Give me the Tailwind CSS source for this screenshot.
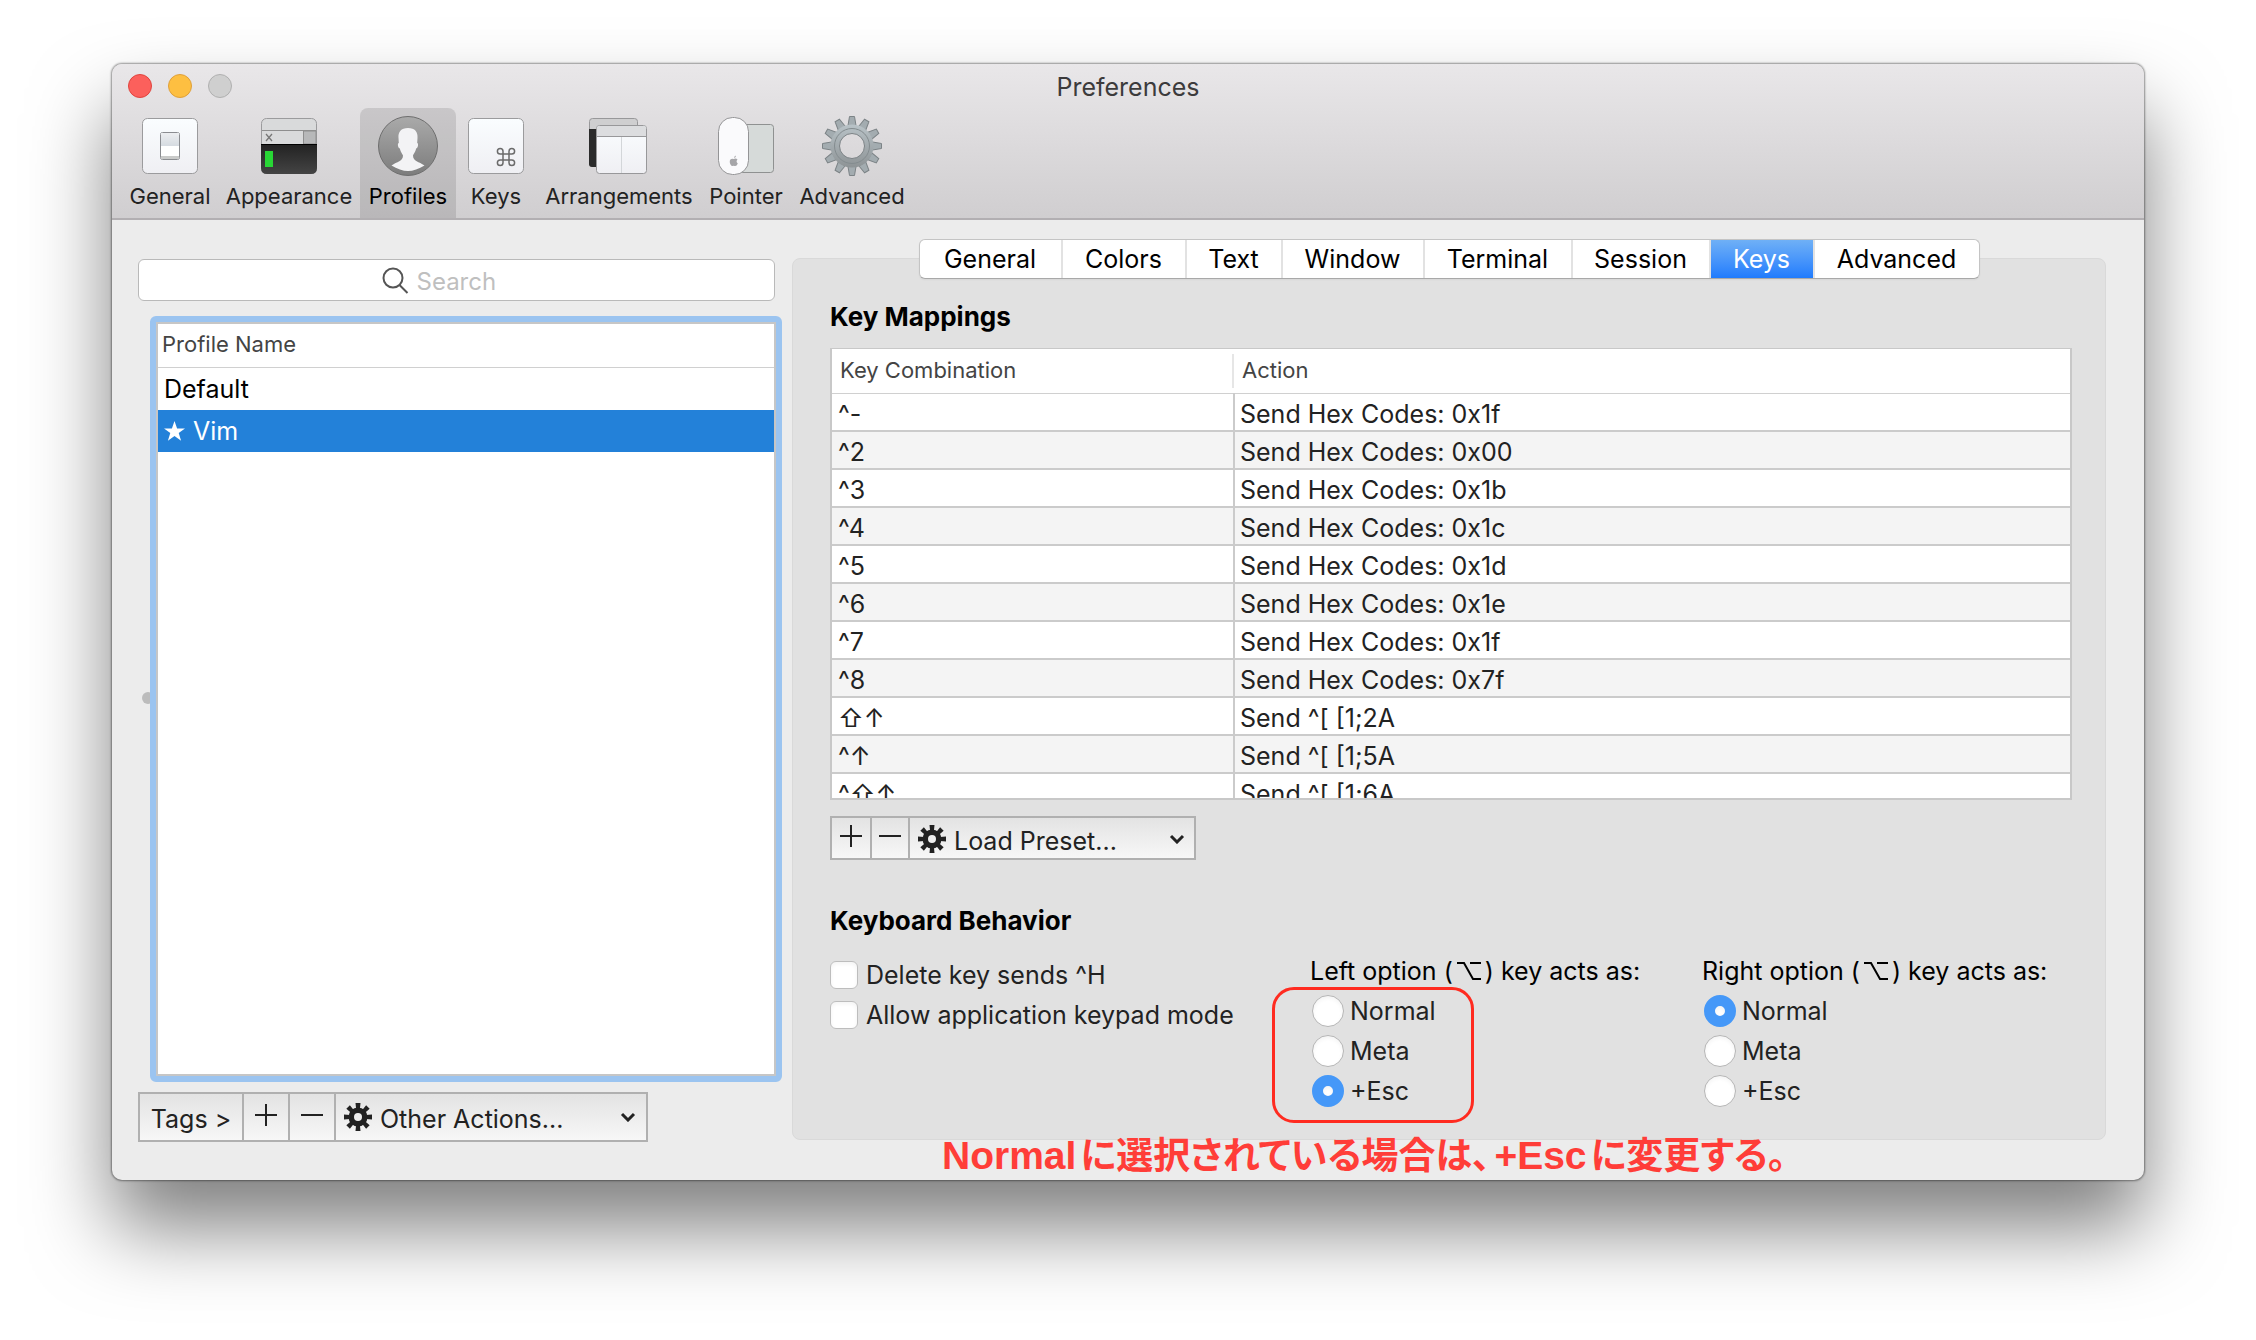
<!DOCTYPE html>
<html lang="en">
<head>
    <meta charset="UTF-8">
    <title>Preferences</title>
    <script src="https://cdn.jsdelivr.net/npm/@tailwindcss/browser@4"></script>
</head>
<body class="bg-white font-['Inter','Noto_Sans_CJK_JP',sans-serif] text-[25px] leading-8 text-black">
    <svg class="hidden">
        <symbol id="gear" viewBox="0 0 28 28">
            <g fill="#222">
                <circle cx="14" cy="14" r="9.5" />
                <path d="M11.5 0h5l-.6 6h-3.8zM11.5 28h5l-.6-6h-3.8zM0 11.5v5l6-.6v-3.8zM28 11.5v5l-6-.6v-3.8z" />
                <path d="M11.5 0h5l-.6 6h-3.8zM11.5 28h5l-.6-6h-3.8zM0 11.5v5l6-.6v-3.8zM28 11.5v5l-6-.6v-3.8z" transform="rotate(45 14 14)" />
            </g>
            <circle cx="14" cy="14" r="4" fill="#efefef" />
        </symbol>
        <symbol id="chevron" viewBox="0 0 16 10">
            <path d="M2 2l6 6 6-6" fill="none" stroke="#222" stroke-width="3" />
        </symbol>
        <symbol id="plus" viewBox="0 0 22 22">
            <path d="M11 0v22M0 11h22" stroke="#222" stroke-width="2" />
        </symbol>
        <symbol id="minus" viewBox="0 0 22 22">
            <path d="M0 11h22" stroke="#222" stroke-width="2" />
        </symbol>
        <symbol id="option" viewBox="0 0 24 20">
            <path d="M0 2h7l9 16h8M13 2h11" fill="none" stroke="#000" stroke-width="2" />
        </symbol>
    </svg>

    <main class="mx-[112px] mt-16 mb-40 rounded-[10px] bg-[#ececec] shadow-[0_0_2px_1px_rgba(0,0,0,0.4),0_48px_80px_rgba(0,0,0,0.5)]">
        <header class="h-[156px] rounded-t-[10px] border-b-2 border-[#b2afb2] bg-linear-to-b from-[#e9e7e9] to-[#d0ced0]">
            <div class="grid h-11 grid-cols-3 items-center px-4">
                <div class="flex gap-4">
                    <button aria-label="Close" class="size-6 rounded-full border border-[#e0443e] bg-[#fc605c]"></button>
                    <button aria-label="Minimize" class="size-6 rounded-full border border-[#dfa03a] bg-[#fdbf41]"></button>
                    <button aria-label="Zoom" class="size-6 rounded-full border border-[#b0b0b0] bg-[#cfcfcf]"></button>
                </div>
                <h1 class="pt-[2px] text-center text-[#3c3b3c]">Preferences</h1>
            </div>
            <nav class="flex h-[110px] px-[10px] text-[22px] leading-7 text-[#222]">
                <button class="flex w-24 flex-col items-center pt-[6px]">
                    <svg width="60" height="68" viewBox="0 0 60 68">
                        <defs>
                            <linearGradient id="plate" x2="0" y2="1"><stop stop-color="#fafdff" /><stop offset="1" stop-color="#efeff3" /></linearGradient>
                            <linearGradient id="switch" x2="0" y2="1"><stop stop-color="#eceef0" /><stop offset="1" stop-color="#d6dbe1" /></linearGradient>
                        </defs>
                        <rect x="2.5" y="4.5" width="55" height="55" rx="5" fill="url(#plate)" stroke="#9b9b9d" />
                        <rect x="20.5" y="18.5" width="19" height="27" rx="2" fill="#fff" stroke="#8a8c90" />
                        <path d="M21 19h18v13H21z" fill="url(#switch)" />
                        <path d="M21 42h18v3H21z" fill="#c9cac9" />
                    </svg>
                    General
                </button>
                <button class="flex w-[142px] flex-col items-center pt-[6px]">
                    <svg width="60" height="68" viewBox="0 0 60 68">
                        <defs>
                            <linearGradient id="screen" x2="0" y2="1"><stop stop-color="#222" /><stop offset="1" stop-color="#444" /></linearGradient>
                        </defs>
                        <rect x="2.5" y="4.5" width="55" height="55" rx="5" fill="#d9dadb" stroke="#9b9b9d" />
                        <path d="M3 16.5h54" stroke="#8e8e8e" />
                        <path d="M44.5 17H57v13H44.5z" fill="#b7b8b9" stroke="#8e8e8e" />
                        <path d="M7 20l6 7M13 20l-6 7" stroke="#777" stroke-width="1.3" />
                        <path d="M2 30h56v24q0 6-6 6H8q-6 0-6-6z" fill="url(#screen)" />
                        <path d="M2 30.5h56" stroke="#000" />
                        <path d="M6 37h8v16H6z" fill="#28d635" />
                    </svg>
                    Appearance
                </button>
                <button class="flex w-24 flex-col items-center rounded-t-lg bg-black/11 pt-[6px] text-black">
                    <svg width="60" height="68" viewBox="0 0 60 68">
                        <defs>
                            <linearGradient id="disc" x2="0" y2="1"><stop stop-color="#aaa" /><stop offset="1" stop-color="#7c7c7c" /></linearGradient>
                        </defs>
                        <circle cx="30" cy="32" r="29.5" fill="url(#disc)" stroke="#6e6e6e" />
                        <path d="M30 14c-7 0-10 4-9.5 10l.3 5c-1.500 0-1 5 1 5.500 1 4 2.500 5 3.200 7 0 6-6 6-11.500 10C19 55 25 57 30 57s11-2 16.500-5.500C41 47.500 35 47.500 35 41.500c.7-2 2.200-3 3.200-7 2-.5 2.500-5.500 1-5.500l.3-5c.5-6-2.500-10-9.500-10z" fill="#f3f3f5" />
                    </svg>
                    Profiles
                </button>
                <button class="flex w-20 flex-col items-center pt-[6px]">
                    <svg width="60" height="68" viewBox="0 0 60 68">
                        <rect x="2.5" y="4.5" width="55" height="55" rx="5" fill="url(#plate)" stroke="#9b9b9d" />
                        <path d="M37 40h6v6h-6zM37 40h-2.800a2.800 2.800 0 1 1 2.800-2.800zM43 40v-2.800a2.800 2.800 0 1 1 2.800 2.800zM43 46h2.800a2.800 2.800 0 1 1-2.800 2.800zM37 46v2.800a2.800 2.800 0 1 1-2.800-2.800z" fill="none" stroke="#6b6b6b" stroke-width="1.5" />
                    </svg>
                    Keys
                </button>
                <button class="flex w-[166px] flex-col items-center pt-[6px]">
                    <svg width="60" height="68" viewBox="0 0 60 68">
                        <rect x="0.5" y="4.5" width="48" height="48" rx="3" fill="#cfcfd0" stroke="#98989a" />
                        <path d="M0 15h12v38H3q-3 0-3-3z" fill="#2b2b2b" />
                        <rect x="7.5" y="11.5" width="50" height="48" rx="3" fill="url(#plate)" stroke="#98989a" />
                        <path d="M8 14q0-2 2-2h45q2 0 2 2v9H8z" fill="#dcdddf" />
                        <path d="M8 22.5h49" stroke="#98989a" />
                        <path d="M32.5 23v36" stroke="#d3d6d9" />
                    </svg>
                    Arrangements
                </button>
                <button class="flex w-[88px] flex-col items-center pt-[6px]">
                    <svg width="60" height="68" viewBox="0 0 60 68">
                        <rect x="20" y="10.5" width="37.5" height="48" rx="3" fill="#d6dad9" stroke="#8f9191" />
                        <rect x="2.5" y="3.5" width="30" height="57" rx="14" fill="#fafafc" stroke="#949496" />
                        <path d="M18 44q0-2 2-2.500 0 2-2 2.500zM17.500 45q2.500-1 4 .5-2 2 .3 4-1.300 3-3 2.500-1.300-.5-2.500 0c-2 0-4-6-1-7q1.200-.5 2.200 0z" fill="#a5a5a8" />
                    </svg>
                    Pointer
                </button>
                <button class="flex w-[124px] flex-col items-center pt-[6px]">
                    <svg width="60" height="68" viewBox="0 0 60 68">
                        <defs>
                            <linearGradient id="metal" gradientUnits="userSpaceOnUse" x1="0" y1="0" x2="0" y2="62"><stop stop-color="#c3ced3" /><stop offset="1" stop-color="#858a8c" /></linearGradient>
                            <path id="teeth" d="M27.5 2.5h5l1.500 9h-8zM27.500 61.500h5l1.500-9h-8z" />
                        </defs>
                        <g fill="#a3acb0" stroke="#7c8386">
                            <use href="#teeth" /><use href="#teeth" transform="rotate(30 30 32)" /><use href="#teeth" transform="rotate(60 30 32)" />
                            <use href="#teeth" transform="rotate(90 30 32)" /><use href="#teeth" transform="rotate(120 30 32)" /><use href="#teeth" transform="rotate(150 30 32)" />
                        </g>
                        <circle cx="30" cy="32" r="17" fill="none" stroke="url(#metal)" stroke-width="9" />
                        <circle cx="30" cy="32" r="17.5" fill="none" stroke="#848c8f" />
                        <circle cx="30" cy="32" r="12.5" fill="none" stroke="#7b8285" />
                    </svg>
                    Advanced
                </button>
            </nav>
        </header>

        <div class="flex h-[960px] pr-[38px] pl-[26px]">
            <aside class="flex w-[644px] flex-col pt-[39px]">
                <label class="flex h-[42px] w-[637px] items-center justify-center gap-2 rounded-md border border-[#b9b9b9] bg-white">
                    <svg width="28" height="28" viewBox="0 0 28 28" fill="none" stroke="#555" stroke-width="2">
                        <circle cx="12" cy="12" r="9.5" />
                        <path d="M18.5 19l8 8" />
                    </svg>
                    <input type="text" placeholder="Search" aria-label="Search" class="w-[116px] pt-[3px] text-[24px] outline-0 placeholder:text-[#bfbfbf]">
                </label>
                <div class="relative mt-[15px] ml-3 h-[766px] w-[632px]">
                    <span class="absolute top-[376px] -left-2 size-3 rounded-full bg-[#bcbcbc]"></span>
                    <div class="relative h-full rounded-md border-[6px] border-[#9bc4f0]">
                        <div class="h-full border-2 border-[#c6c6c6] bg-white">
                            <div class="flex h-11 items-center border-b border-[#d0d0d0] px-1 pb-1 text-[22px] text-[#444]">Profile Name</div>
                            <button class="flex h-[42px] w-full items-center px-[6px]">Default</button>
                            <button class="flex h-[42px] w-full items-center gap-2 bg-[#2381d9] px-[6px] text-white">
                                <svg width="21" height="20" viewBox="0 0 21 20"><path d="M10.500 0l2.600 7.400h7.900l-6.300 4.700 2.400 7.600-6.600-4.700-6.600 4.700 2.400-7.600L0 7.400h7.900z" fill="#fff" /></svg>
                                Vim
                            </button>
                        </div>
                    </div>
                </div>
                <div class="mt-[10px] flex h-[50px] w-fit divide-x-2 divide-[#b0b0b0] border-2 border-[#b0b0b0] bg-linear-to-b from-[#e3e3e3] to-[#f7f7f7] text-[#222]">
                    <button class="w-[104px] pt-[3px]">Tags &gt;</button>
                    <button aria-label="Add profile" class="flex w-[46px] justify-center pt-[10px]"><svg width="22" height="22"><use href="#plus" /></svg></button>
                    <button aria-label="Remove profile" class="flex w-[46px] justify-center pt-[10px]"><svg width="22" height="22"><use href="#minus" /></svg></button>
                    <div class="flex w-[310px] items-center gap-2 pr-[10px] pl-2">
                        <svg width="28" height="28"><use href="#gear" /></svg>
                        <select aria-label="Other actions" class="flex-1 appearance-none pt-[3px] outline-0">
                            <option>Other Actions...</option>
                        </select>
                        <svg width="16" height="10"><use href="#chevron" /></svg>
                    </div>
                </div>
            </aside>

            <section class="ml-[10px] flex-1 pt-[38px]">
                <div class="h-[882px] rounded-lg border border-[#d9d9d9] bg-[#e1e1e1] pr-[33px] pl-[37px]">
                    <div class="-mt-5 mr-1 flex justify-center">
                        <div class="flex h-10 divide-x-2 divide-[#e2e2e2] overflow-hidden rounded-md border border-[#c4c4c4] border-b-[#a8a8a8] bg-white shadow-xs">
                            <button class="w-[143px]">General</button>
                            <button class="w-[124px]">Colors</button>
                            <button class="w-24">Text</button>
                            <button class="w-[142px]">Window</button>
                            <button class="w-[148px]">Terminal</button>
                            <button class="w-[138px]">Session</button>
                            <button class="w-[104px] bg-linear-to-b from-[#6fb0f6] to-[#1f7bfd] text-white">Keys</button>
                            <button class="w-[164px]">Advanced</button>
                        </div>
                    </div>
                    <h2 class="mt-[22px] text-[26px] font-bold">Key Mappings</h2>
                    <div class="mt-[15px] h-[452px] overflow-hidden border-2 border-t border-[#c8c8c8] bg-white">
                        <table class="w-full table-fixed border-collapse text-left text-[#222]">
                            <thead class="text-[22px] text-[#444]">
                                <tr class="h-11 border-b border-[#d0d0d0]">
                                    <th class="w-[402px] p-0 font-normal"><div class="h-[34px] border-r-2 border-[#e6e6e6] pl-2">Key Combination</div></th>
                                    <th class="p-0 pl-2 font-normal"><div class="h-[34px]">Action</div></th>
                                </tr>
                            </thead>
                            <tbody id="mappings"></tbody>
                        </table>
                    </div>
                    <div class="mt-4 flex h-11 w-fit divide-x-2 divide-[#b0b0b0] border-2 border-[#b0b0b0] bg-linear-to-b from-[#e3e3e3] to-[#f7f7f7] text-[#222]">
                        <button aria-label="Add mapping" class="flex w-10 justify-center pt-[7px]"><svg width="22" height="22"><use href="#plus" /></svg></button>
                        <button aria-label="Remove mapping" class="flex w-[38px] justify-center pt-[7px]"><svg width="22" height="22"><use href="#minus" /></svg></button>
                        <div class="flex w-[284px] items-center gap-2 pt-[2px] pr-[9px] pl-2">
                            <svg width="28" height="28"><use href="#gear" /></svg>
                            <select aria-label="Load preset" class="flex-1 appearance-none pt-[3px] outline-0">
                                <option>Load Preset...</option>
                            </select>
                            <svg width="16" height="10"><use href="#chevron" /></svg>
                        </div>
                    </div>
                    <h2 class="mt-[45px] text-[26px] font-bold">Keyboard Behavior</h2>
                    <div class="mt-[18px] flex text-[#222]">
                        <div class="w-[480px]">
                            <label class="flex h-10 items-center gap-2"><input type="checkbox" class="size-7 appearance-none rounded-md border border-[#bdbdbd] bg-white shadow-inner">Delete key sends ^H</label>
                            <label class="flex h-10 items-center gap-2"><input type="checkbox" class="size-7 appearance-none rounded-md border border-[#bdbdbd] bg-white shadow-inner">Allow application keypad mode</label>
                        </div>
                        <fieldset class="relative w-[392px]">
                            <legend class="flex h-9 items-center pb-1 text-black">Left option (<svg class="mx-1" width="24" height="20"><use href="#option" /></svg>) key acts as:</legend>
                            <label class="flex h-10 items-center gap-[6px] pl-[2px]"><input type="radio" name="left" class="size-8 appearance-none rounded-full border border-[#b5b5b5] bg-white shadow-inner checked:border-[11px] checked:border-[#4598f8]">Normal</label>
                            <label class="flex h-10 items-center gap-[6px] pl-[2px]"><input type="radio" name="left" class="size-8 appearance-none rounded-full border border-[#b5b5b5] bg-white shadow-inner checked:border-[11px] checked:border-[#4598f8]">Meta</label>
                            <label class="flex h-10 items-center gap-[6px] pl-[2px]"><input type="radio" name="left" checked class="size-8 appearance-none rounded-full border border-[#b5b5b5] bg-white shadow-inner checked:border-[11px] checked:border-[#4598f8]">+Esc</label>
                            <div class="pointer-events-none absolute -top-1 -left-[38px] h-[136px] w-[202px] rounded-[22px] border-3 border-[#ff2b20]"></div>
                        </fieldset>
                        <fieldset>
                            <legend class="flex h-9 items-center pb-1 text-black">Right option (<svg class="mx-1" width="24" height="20"><use href="#option" /></svg>) key acts as:</legend>
                            <label class="flex h-10 items-center gap-[6px] pl-[2px]"><input type="radio" name="right" checked class="size-8 appearance-none rounded-full border border-[#b5b5b5] bg-white shadow-inner checked:border-[11px] checked:border-[#4598f8]">Normal</label>
                            <label class="flex h-10 items-center gap-[6px] pl-[2px]"><input type="radio" name="right" class="size-8 appearance-none rounded-full border border-[#b5b5b5] bg-white shadow-inner checked:border-[11px] checked:border-[#4598f8]">Meta</label>
                            <label class="flex h-10 items-center gap-[6px] pl-[2px]"><input type="radio" name="right" class="size-8 appearance-none rounded-full border border-[#b5b5b5] bg-white shadow-inner checked:border-[11px] checked:border-[#4598f8]">+Esc</label>
                        </fieldset>
                    </div>
                </div>
                <p lang="ja" class="pl-[150px] font-['Liberation_Sans','Noto_Sans_CJK_JP',sans-serif] text-[37px] leading-8 font-bold text-[#ff3d38] [font-feature-settings:'palt']"><span class="mr-1 text-[39px]">Normal</span>に選択されている場合は、<span class="mr-1 ml-1 text-[39px]">+Esc</span>に変更する。</p>
            </section>
        </div>
    </main>
    <script>
        const mappings = [
            ["^-", "Send Hex Codes: 0x1f"],
            ["^2", "Send Hex Codes: 0x00"],
            ["^3", "Send Hex Codes: 0x1b"],
            ["^4", "Send Hex Codes: 0x1c"],
            ["^5", "Send Hex Codes: 0x1d"],
            ["^6", "Send Hex Codes: 0x1e"],
            ["^7", "Send Hex Codes: 0x1f"],
            ["^8", "Send Hex Codes: 0x7f"],
            ["⇧↑", "Send ^[ [1;2A"],
            ["^↑", "Send ^[ [1;5A"],
            ["^⇧↑", "Send ^[ [1;6A"],
        ]
        document.getElementById("mappings").innerHTML = mappings.map(([key, action]) => `<tr class="h-[38px] border-b-2 border-[#cbcbcb] even:bg-[#f4f4f4]">
            <td class="border-r-2 border-[#cbcbcb] p-0 pt-1 pl-[6px]">${key}</td>
            <td class="p-0 pt-1 pl-[5px]">${action}</td>
        </tr>`).join("")
    </script>
</body>
</html>
